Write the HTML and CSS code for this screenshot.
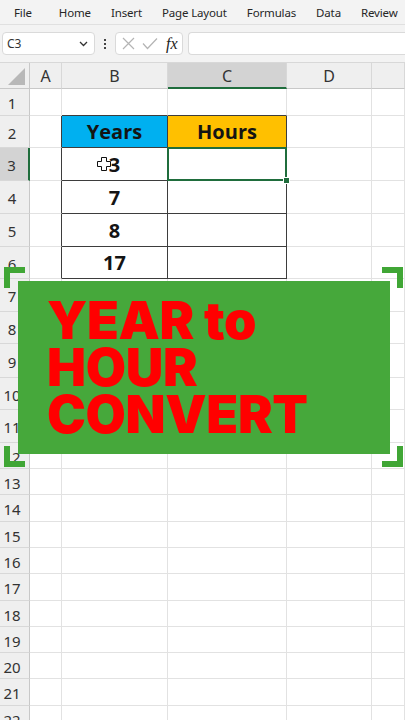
FILE: index.html
```html
<!DOCTYPE html>
<html>
<head>
<meta charset="utf-8">
<link rel="stylesheet" href="styles.css">
</head>
<body>
<div class="app">
  <nav class="menu">
    <span class="mi first">File</span>
    <span class="mi">Home</span>
    <span class="mi">Insert</span>
    <span class="mi">Page Layout</span>
    <span class="mi">Formulas</span>
    <span class="mi">Data</span>
    <span class="mi">Review</span>
  </nav>
  <div class="fbar">
    <div class="namebox">
      <span>C3</span>
      <svg class="chev" width="9" height="6" viewBox="0 0 9 6"><path d="M1 1 L4.5 4.5 L8 1" fill="none" stroke="#333" stroke-width="1.3"/></svg>
    </div>
    <div class="dots"><i></i><i></i><i></i></div>
    <div class="fxbox">
      <svg width="13" height="13" viewBox="0 0 13 13"><path d="M1 1 L12 12 M12 1 L1 12" stroke="#b4b4b4" stroke-width="1.2" fill="none"/></svg>
      <svg width="16" height="13" viewBox="0 0 16 13"><path d="M1 6.5 L5.5 11.5 L15 1.5" stroke="#b4b4b4" stroke-width="1.2" fill="none"/></svg>
      <span class="fx">fx</span>
    </div>
    <div class="finput"></div>
  </div>

  <div class="sheet">
    <div class="row h26">
      <div class="corner"><span class="tri"></span></div>
      <div class="ch">A</div><div class="ch">B</div><div class="ch csel">C</div><div class="ch">D</div><div class="ch"></div>
    </div>
    <div class="row h27">
      <div class="rh">1</div><div></div><div class="dkb"></div><div class="dkb"></div><div></div><div></div>
    </div>
    <div class="row h32">
      <div class="rh">2</div><div class="dkr"></div><div class="dkb dkr val yrs">Years</div><div class="dkb dkr val hrs">Hours</div><div></div><div></div>
    </div>
    <div class="row h33">
      <div class="rh rsel">3</div><div class="dkr"></div><div class="dkb dkr val">3</div><div class="dkb dkr sel"><span class="fh"></span></div><div></div><div></div>
    </div>
    <div class="row h33">
      <div class="rh">4</div><div class="dkr"></div><div class="dkb dkr val">7</div><div class="dkb dkr"></div><div></div><div></div>
    </div>
    <div class="row h33">
      <div class="rh">5</div><div class="dkr"></div><div class="dkb dkr val">8</div><div class="dkb dkr"></div><div></div><div></div>
    </div>
    <div class="row h32">
      <div class="rh">6</div><div class="dkr"></div><div class="dkb dkr val">17</div><div class="dkb dkr"></div><div></div><div></div>
    </div>
    <div class="row h33"><div class="rh">7</div><div></div><div></div><div></div><div></div><div></div></div>
    <div class="row h32"><div class="rh">8</div><div></div><div></div><div></div><div></div><div></div></div>
    <div class="row h34"><div class="rh">9</div><div></div><div></div><div></div><div></div><div></div></div>
    <div class="row h32"><div class="rh">10</div><div></div><div></div><div></div><div></div><div></div></div>
    <div class="row h33"><div class="rh">11</div><div></div><div></div><div></div><div></div><div></div></div>
    <div class="row h26"><div class="rh">12</div><div></div><div></div><div></div><div></div><div></div></div>
    <div class="row h26"><div class="rh">13</div><div></div><div></div><div></div><div></div><div></div></div>
    <div class="row h27"><div class="rh">14</div><div></div><div></div><div></div><div></div><div></div></div>
    <div class="row h26"><div class="rh">15</div><div></div><div></div><div></div><div></div><div></div></div>
    <div class="row h26"><div class="rh">16</div><div></div><div></div><div></div><div></div><div></div></div>
    <div class="row h27"><div class="rh">17</div><div></div><div></div><div></div><div></div><div></div></div>
    <div class="row h26"><div class="rh">18</div><div></div><div></div><div></div><div></div><div></div></div>
    <div class="row h26"><div class="rh">19</div><div></div><div></div><div></div><div></div><div></div></div>
    <div class="row h26"><div class="rh">20</div><div></div><div></div><div></div><div></div><div></div></div>
    <div class="row h27"><div class="rh">21</div><div></div><div></div><div></div><div></div><div></div></div>
    <div class="row h26"><div class="rh">22</div><div></div><div></div><div></div><div></div><div></div></div>
  </div>

  <svg class="cursor" width="14" height="14" viewBox="0 0 14 14"><path d="M4.5 0.5 H9.5 V4.5 H13.5 V9.5 H9.5 V13.5 H4.5 V9.5 H0.5 V4.5 H4.5 Z" fill="#fff" stroke="#111" stroke-width="1"/></svg>

  <span class="br tl"></span><span class="br tr"></span><span class="br bl"></span><span class="br brr"></span>
  <div class="banner">
    <p class="title"><span class="ln">YEAR to</span><span class="ln">HOUR</span><span class="ln">CONVERT</span></p>
  </div>
</div>
</body>
</html>
```

FILE: styles.css
```css
html, body { margin: 0; padding: 0; }
body { background: #fff; font-family: "Noto Sans", "Open Sans", sans-serif; }
.app { width: 405px; height: 720px; overflow: hidden; position: relative; background: #f3f3f3; }

.menu { height: 25px; box-sizing: border-box; border-bottom: 1px solid #e0e0e0; display: flex; align-items: center; gap: 20px; padding-left: 14px; font-size: 11.5px; letter-spacing: -0.15px; color: #262626; white-space: nowrap; }
.menu .first { margin-right: 7px; }

.fbar { height: 37px; box-sizing: border-box; display: flex; align-items: center; padding-left: 2px; }
.namebox { width: 93px; height: 23px; box-sizing: border-box; background: #fff; border: 1px solid #dadada; border-radius: 4px; display: flex; align-items: center; justify-content: space-between; padding: 0 6px 0 4px; font-size: 12px; color: #333; }
.dots { width: 20px; display: flex; flex-direction: column; align-items: center; gap: 2px; }
.dots i { display: block; width: 2px; height: 2px; background: #444; }
.fxbox { width: 68px; height: 23px; box-sizing: border-box; background: #fff; border: 1px solid #dadada; border-radius: 4px; display: flex; align-items: center; gap: 7px; padding-left: 6px; }
.fx { font-family: "Liberation Serif", serif; font-style: italic; font-size: 16px; color: #222; margin-left: 1px; }
.finput { flex: 1; margin-left: 5px; height: 23px; box-sizing: border-box; background: #fff; border: 1px solid #dadada; border-radius: 4px 0 0 4px; border-right: none; }

.sheet { background: #fff; border-top: 1px solid #d8d8d8; }
.row { display: grid; grid-template-columns: 30px 32px 106px 119px 85px 33px; }
.row > div { box-sizing: border-box; border-right: 1px solid #e2e2e2; border-bottom: 1px solid #e2e2e2; }
.h26 { height: 26px; }
.h27 { height: 27px; }
.h32 { height: 32px; }
.h33 { height: 33px; }
.h34 { height: 34px; }

.row > .corner { background: #efefef; border-right: 1px solid #c8c8c8; border-bottom: 1px solid #c8c8c8; position: relative; }
.tri { position: absolute; right: 4px; bottom: 3px; width: 0; height: 0; border-left: 17px solid transparent; border-bottom: 17px solid #b8b8b8; }
.row > .ch { background: #efefef; border-bottom: 1px solid #c8c8c8; border-right-color: #d8d8d8; display: flex; align-items: center; justify-content: center; font-size: 16px; color: #333; padding-top: 1px; }
.row > .csel { background: #d3d3d3; border-bottom: 2px solid #1f6d3c; }
.row > .rh { background: #efefef; border-right: 1px solid #c8c8c8; border-bottom-color: #d8d8d8; display: flex; align-items: center; justify-content: center; font-size: 15px; color: #333; padding: 2px 5px 0 0; }
.row > .rsel { background: #d3d3d3; border-right: 2px solid #1f6d3c; }

.row > .dkb { border-bottom-color: #3d3d3d; }
.row > .dkr { border-right-color: #3d3d3d; }
.val { display: flex; align-items: center; justify-content: center; font-family: "Open Sans", sans-serif; font-weight: 700; font-size: 20px; color: #141414; }
.row > .yrs { background: #00b0f0; }
.row > .hrs { background: #ffc000; }

.sel { position: relative; }
.sel::after { content: ""; position: absolute; left: -1px; top: -1px; right: -1px; bottom: -1px; border: 2px solid #1f6d3c; }
.fh { position: absolute; right: -4px; bottom: -4px; width: 5px; height: 5px; background: #1f6d3c; border: 1px solid #fff; z-index: 2; }

.cursor { position: absolute; left: 97px; top: 157px; }

.banner { position: absolute; left: 18px; top: 281px; width: 372px; height: 173px; background: #46a83b; }
.title { margin: 0; padding: 20px 0 0 29px; display: flex; flex-direction: column; gap: 7px; font-family: Inter, "Noto Sans", sans-serif; font-weight: 900; font-size: 52px; color: #ff0000; letter-spacing: -0.3px; white-space: nowrap; }
.ln { display: block; line-height: 40px; height: 40px; }

.br { position: absolute; width: 21px; height: 21px; box-sizing: border-box; border: 0 solid #40a635; }
.tl { left: 4px; top: 267px; border-top-width: 6px; border-left-width: 6px; }
.tr { left: 382px; top: 267px; border-top-width: 6px; border-right-width: 6px; }
.bl { left: 4px; top: 446px; border-bottom-width: 6px; border-left-width: 6px; }
.brr { left: 382px; top: 446px; border-bottom-width: 6px; border-right-width: 6px; }
```
